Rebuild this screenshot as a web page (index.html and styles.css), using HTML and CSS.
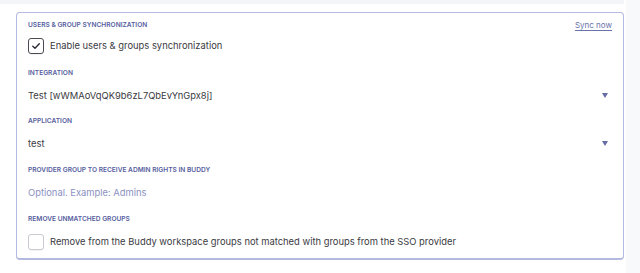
FILE: index.html
```html
<!DOCTYPE html>
<html>
<head>
<meta charset="utf-8">
<link rel="stylesheet" href="styles.css">
</head>
<body>
<div class="page">
  <div class="main">
    <div class="topstrip"></div>
    <div class="card">
      <div class="head">
        <span class="label">Users &amp; group synchronization</span>
        <a class="sync">Sync now</a>
      </div>
      <div class="check-row first">
        <span class="box checked">
          <svg width="10" height="10" viewBox="0 0 10 10"><path d="M1.8 5.2 L4 7.3 L8.3 2.8" fill="none" stroke="#2b2b33" stroke-width="1.4" stroke-linecap="round" stroke-linejoin="round"/></svg>
        </span>
        <span class="text">Enable users &amp; groups synchronization</span>
      </div>
      <div class="field">
        <span class="label">Integration</span>
        <div class="input select">
          <span class="text">Test [wWMAoVqQK9b6zL7QbEvYnGpx8j]</span>
          <span class="caret"></span>
        </div>
      </div>
      <div class="field">
        <span class="label">Application</span>
        <div class="input select">
          <span class="text">test</span>
          <span class="caret"></span>
        </div>
      </div>
      <div class="field">
        <span class="label">Provider group to receive admin rights in Buddy</span>
        <div class="input">
          <span class="text placeholder">Optional. Example: Admins</span>
        </div>
      </div>
      <div class="field last">
        <span class="label">Remove unmatched groups</span>
        <div class="check-row">
          <span class="box"></span>
          <span class="text">Remove from the Buddy workspace groups not matched with groups from the SSO provider</span>
        </div>
      </div>
    </div>
  </div>
  <div class="sidebar"></div>
</div>
</body>
</html>
```

FILE: styles.css
```css
html, body {
  margin: 0;
  padding: 0;
  background: #ffffff;
  font-family: Inter, "Noto Sans", sans-serif;
}
.page {
  display: flex;
  width: 640px;
  height: 273px;
  overflow: hidden;
}
.main {
  flex: 1;
  display: flex;
  flex-direction: column;
}
.sidebar {
  width: 14px;
  background: #f8f9fb;
}
.topstrip {
  height: 4px;
  background: #f4f5f8;
  margin-right: 2px;
}
.card {
  margin: 7.5px 2px 0 16px;
  border: 1px solid #b3b9df;
  border-bottom-width: 2px;
  border-radius: 4px;
  padding: 7.5px 10px 8px 11px;
  display: flex;
  flex-direction: column;
}
.head {
  display: flex;
  justify-content: space-between;
  align-items: center;
  height: 10px;
}
.label {
  font-size: 6.6px;
  font-weight: 600;
  text-transform: uppercase;
  color: #565e9e;
  line-height: 10px;
  height: 10px;
}
.sync {
  font-size: 8px;
  color: #6a72aa;
  text-decoration: underline;
  text-underline-offset: 2px;
  line-height: 10px;
  margin-right: 1px;
}
.check-row {
  display: flex;
  align-items: center;
  gap: 6px;
  height: 16px;
}
.check-row.first {
  margin-top: 7.5px;
  margin-bottom: 14px;
}
.box {
  width: 14px;
  height: 14px;
  border: 1px solid #c9cad4;
  border-radius: 3px;
  display: flex;
  align-items: center;
  justify-content: center;
  box-shadow: 0 1px 1px rgba(0,0,0,0.06);
  flex: none;
}
.box.checked {
  border-color: #4a4a52;
}
.text {
  font-size: 9.4px;
  color: #3a3a42;
}
.field {
  display: flex;
  flex-direction: column;
  gap: 6.5px;
  margin-bottom: 10.4px;
}
.field.last {
  margin-bottom: 0;
}
.field.last .check-row {
  margin-top: 3px;
}
.input {
  height: 22px;
  display: flex;
  align-items: center;
  justify-content: space-between;
  padding-right: 5px;
}
.placeholder {
  color: #8b91c2;
}
.caret {
  width: 0;
  height: 0;
  border-left: 3.5px solid transparent;
  border-right: 3.5px solid transparent;
  border-top: 5px solid #646ca4;
}
```
